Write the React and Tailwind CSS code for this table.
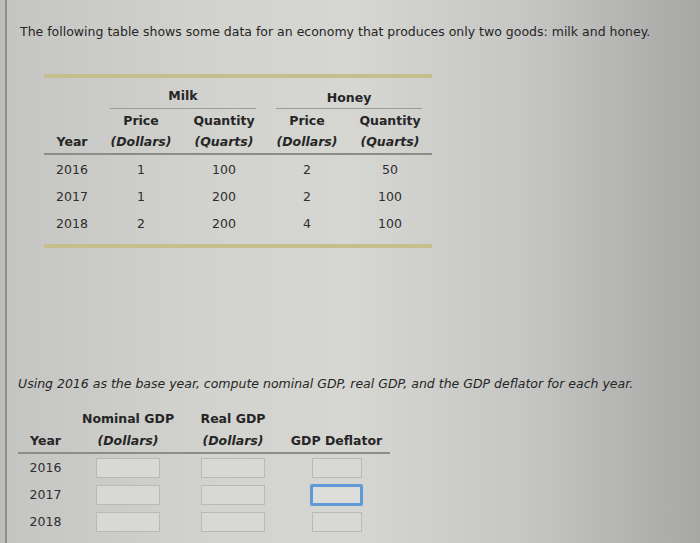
const milkHoney = [
  { year: '2016', mp: '1', mq: '100', hp: '2', hq: '50' },
  { year: '2017', mp: '1', mq: '200', hp: '2', hq: '100' },
  { year: '2018', mp: '2', mq: '200', hp: '4', hq: '100' },
];

const cols = 'grid grid-cols-[56px_82px_84px_82px_84px] text-center';
const gdpCols = 'grid grid-cols-[55px_110px_100px_107px] text-center';

function Box({ focused, w = 'w-[64px]' }) {
  return (
    <div
      className={
        focused
          ? 'mx-auto w-[53px] h-[22px] rounded-[2px] border-[3px] border-[#5f9ad6] bg-[#dcdcda]'
          : `mx-auto ${w} h-[20px] border border-[#b9b9b7] bg-[#d8d8d5]`
      }
    />
  );
}

export default function App() {
  return (
    <div className="w-[700px] h-[543px] overflow-hidden flex bg-[linear-gradient(90deg,#c4c4c2_0%,#d2d2cf_30%,#d6d6d3_50%,#c6c6c4_75%,#a7a7a6_100%)] font-['DejaVu_Sans',sans-serif] text-[12.5px] leading-[16px] text-[#262626]">
      <div className="w-[5px] bg-[#bdbdbb]" />
      <div className="w-[2px] bg-[#8f8f8f]" />
      <div className="flex-1 pl-[13px]">
        <p className="mt-[24px]">
          The following table shows some data for an economy that produces only two goods: milk and honey.
        </p>

        {/* Milk and honey table */}
        <div className="ml-[24px] mt-[34px] w-[388px]">
          <div className="h-[4px] bg-[#c7be8e]" />
          <div className={`${cols} font-bold mt-[10px]`}>
            <div />
            <div className="col-span-2 mx-[10px] border-b border-[#9c9c9a] pb-[2px]">Milk</div>
            <div className="col-span-2 mx-[10px] mt-[2px] border-b border-[#9c9c9a] pb-[2px]">Honey</div>
          </div>
          <div className={`${cols} font-bold mt-[1px] leading-[21px]`}>
            <div className="flex items-end justify-center">Year</div>
            <div>Price<br /><i>(Dollars)</i></div>
            <div>Quantity<br /><i>(Quarts)</i></div>
            <div>Price<br /><i>(Dollars)</i></div>
            <div>Quantity<br /><i>(Quarts)</i></div>
          </div>
          <div className="h-[2px] bg-[#8c8c8a] mt-[1px]" />
          <div className="pt-[1px] pb-[7px] text-[#2e2e2e]">
            {milkHoney.map((r) => (
              <div key={r.year} className={`${cols} h-[27px] items-center`}>
                <div>{r.year}</div>
                <div>{r.mp}</div>
                <div>{r.mq}</div>
                <div>{r.hp}</div>
                <div>{r.hq}</div>
              </div>
            ))}
          </div>
          <div className="h-[4px] bg-[#c7be8e]" />
        </div>

        <p className="mt-[128px] -ml-[2px] italic">
          Using 2016 as the base year, compute nominal GDP, real GDP, and the GDP deflator for each year.
        </p>

        {/* GDP answer table */}
        <div className="mt-[16px] w-[372px] -ml-[2px]">
          <div className={`${gdpCols} font-bold leading-[22px]`}>
            <div className="flex items-end justify-center">Year</div>
            <div>Nominal GDP<br /><i>(Dollars)</i></div>
            <div>Real GDP<br /><i>(Dollars)</i></div>
            <div className="flex items-end justify-center">GDP Deflator</div>
          </div>
          <div className="h-[2px] bg-[#8c8c8a]" />
          <div className="text-[#2e2e2e]">
            {['2016', '2017', '2018'].map((y) => (
              <div key={y} className={`${gdpCols} h-[27px] items-center`}>
                <div>{y}</div>
                <Box />
                <Box />
                <Box focused={y === '2017'} w="w-[50px]" />
              </div>
            ))}
          </div>
        </div>
      </div>
    </div>
  );
}
